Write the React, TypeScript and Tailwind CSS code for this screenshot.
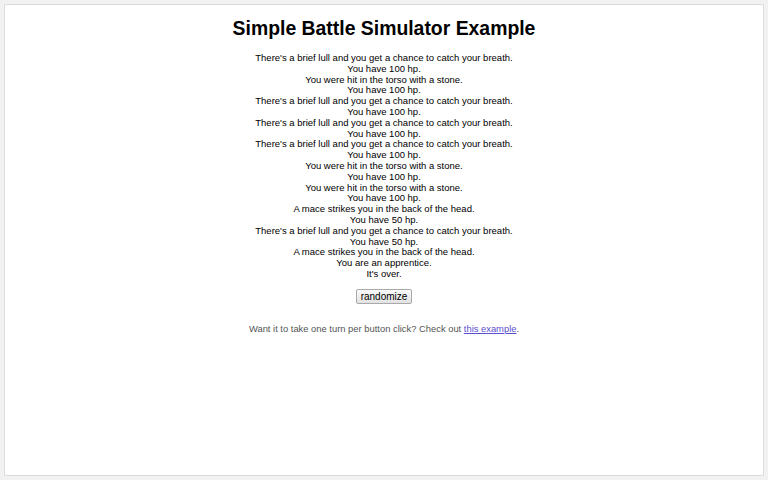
import { useState } from "react";

const log = [
  "There's a brief lull and you get a chance to catch your breath.",
  "You have 100 hp.",
  "You were hit in the torso with a stone.",
  "You have 100 hp.",
  "There's a brief lull and you get a chance to catch your breath.",
  "You have 100 hp.",
  "There's a brief lull and you get a chance to catch your breath.",
  "You have 100 hp.",
  "There's a brief lull and you get a chance to catch your breath.",
  "You have 100 hp.",
  "You were hit in the torso with a stone.",
  "You have 100 hp.",
  "You were hit in the torso with a stone.",
  "You have 100 hp.",
  "A mace strikes you in the back of the head.",
  "You have 50 hp.",
  "There's a brief lull and you get a chance to catch your breath.",
  "You have 50 hp.",
  "A mace strikes you in the back of the head.",
  "You are an apprentice.",
  "It's over.",
];

export default function App() {
  const [lines] = useState(log);

  return (
    <div className="h-[480px] w-[768px] bg-[#f2f2f2] p-[4px] font-['Liberation_Sans',Arial,sans-serif]">
      <div className="flex h-full flex-col items-center border border-[#dcdcdc] bg-white">
        {/* Heading */}
        <h1 className="mt-[11px] text-[19.4px] font-bold leading-[24px] text-black">
          Simple Battle Simulator Example
        </h1>

        {/* Battle log */}
        <div className="mt-[13px] flex flex-col items-center text-[9.5px] leading-[10.8px] text-black">
          {lines.map((line, i) => (
            <div key={i}>{line}</div>
          ))}
        </div>

        <button className="mt-[9px] h-[15px] rounded-[2px] border border-[#a9a9a9] bg-gradient-to-b from-[#fafafa] to-[#e2e2e2] px-[4px] text-[10px] leading-[13px] text-black">
          randomize
        </button>

        <p className="mt-[19px] text-[9.4px] leading-[12px] text-[#555]">
          Want it to take one turn per button click? Check out{" "}
          <a href="#" className="text-[#5a4fd1] underline">
            this example
          </a>
          .
        </p>
      </div>
    </div>
  );
}
